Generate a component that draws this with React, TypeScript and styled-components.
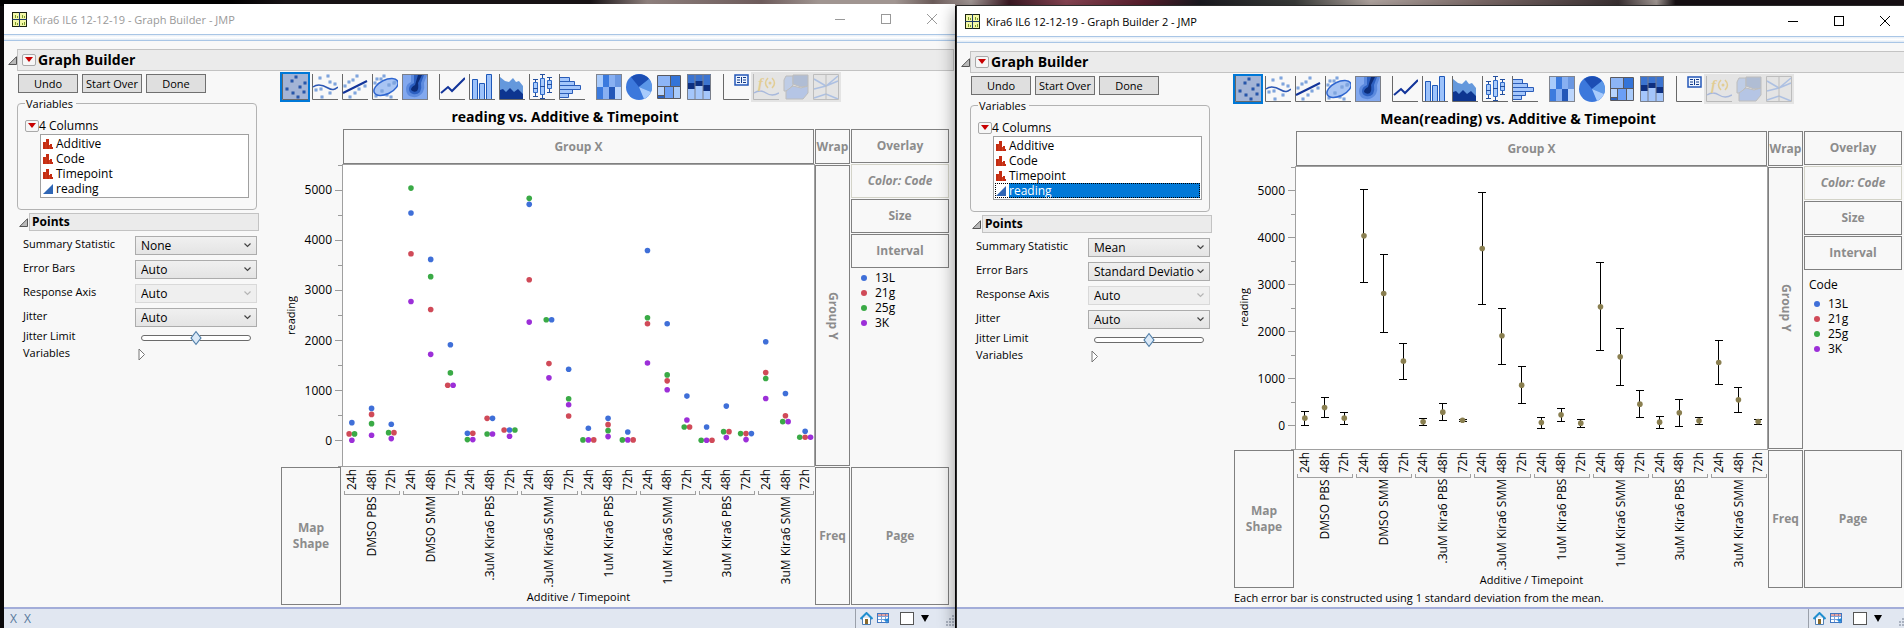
import React from 'react';
import styled, { createGlobalStyle, css } from 'styled-components';

/* ---------- data ---------- */

type CodeName = '13L' | '21g' | '25g' | '3K';

const codeColors: Record<CodeName, string> = {
  '13L': '#3f6fd8',
  '21g': '#d04a58',
  '25g': '#3aaa46',
  '3K': '#9c2fd8',
};

const B: CodeName = '13L';
const R: CodeName = '21g';
const G: CodeName = '25g';
const P: CodeName = '3K';

/* code, reading, jitter step */
type Reading = [CodeName, number, number?];

const readings: Reading[][] = [
  [[B, 364], [R, 140, -1], [G, 140, 1], [P, 13]],
  [[B, 648], [R, 529], [G, 344], [P, 112]],
  [[B, 331], [G, 165, -1], [R, 165, 1], [P, 46]],
  [[G, 5040], [B, 4544], [R, 3730], [P, 2778]],
  [[B, 3618], [G, 3274], [R, 2619], [P, 1726]],
  [[B, 1918], [G, 1356], [R, 1111, -1], [P, 1111, 1]],
  [[B, 152, -1], [R, 152, 1], [G, 26, -1], [P, 26, 1]],
  [[R, 450, -1], [B, 450, 1], [G, 139, -1], [P, 139, 1]],
  [[R, 218, -2], [B, 218], [G, 218, 2], [P, 93]],
  [[G, 4835], [B, 4716], [R, 3214], [P, 2368]],
  [[G, 2414, -1], [B, 2414, 1], [R, 1541], [P, 1257]],
  [[B, 1429], [G, 840], [P, 721], [R, 496]],
  [[B, 251], [G, 20, -2], [P, 20], [R, 20, 2]],
  [[B, 450], [R, 324], [G, 205], [P, 86]],
  [[B, 179], [G, 20, -2], [P, 20], [R, 20, 2]],
  [[B, 3796], [G, 2454], [R, 2335], [P, 1554]],
  [[B, 2335], [G, 1316], [R, 1197], [P, 1019]],
  [[B, 893], [P, 417], [G, 278, -1], [R, 278, 1]],
  [[B, 278], [G, 13, -2], [P, 13], [R, 13, 2]],
  [[B, 694], [G, 185, -1], [R, 185, 1], [P, 66]],
  [[G, 146, -2], [R, 146], [B, 146, 2], [P, 26]],
  [[B, 1978], [R, 1362], [G, 1243], [P, 847]],
  [[B, 946], [R, 503], [G, 384, -1], [P, 384, 1]],
  [[B, 192], [G, 73, -2], [R, 73], [P, 73, 2]],
];

/* mean, mean + sd, mean - sd */
const means: [number, number, number][] = [
  [156, 298, 0], [383, 596, 170], [156, 277, 21],
  [4035, 5021, 3043], [2809, 3638, 1979], [1369, 1745, 979],
  [78, 149, 0], [284, 468, 106], [113, 135, 85],
  [3766, 4957, 2574], [1908, 2489, 1298], [858, 1255, 468],
  [64, 170, -64], [227, 362, 85], [50, 128, -43],
  [2525, 3468, 1596], [1461, 2064, 851], [454, 745, 170],
  [71, 191, -64], [270, 553, -21], [99, 170, 21],
  [1340, 1809, 872], [546, 809, 277], [85, 128, 21],
];

const additives = [
  'DMSO PBS', 'DMSO SMM', '.3uM Kira6 PBS', '.3uM Kira6 SMM',
  '1uM Kira6 PBS', '1uM Kira6 SMM', '3uM Kira6 PBS', '3uM Kira6 SMM',
];
const timepoints = ['24h', '48h', '72h'];

const columns = [
  { name: 'Additive', nominal: true },
  { name: 'Code', nominal: true },
  { name: 'Timepoint', nominal: true },
  { name: 'reading', nominal: false },
];

const yMax = 5500;
const ySpan = 6000;
const yPct = (v: number) => `${((yMax - v) / ySpan) * 100}%`;

/* ---------- styles ---------- */

const Global = createGlobalStyle`
  * { box-sizing: border-box; }
  body {
    margin: 0;
    background: #000;
    color: #000;
    font-family: "Open Sans", "Noto Sans", sans-serif;
    font-size: 12px;
    line-height: 15px;
  }
  button, select, input { font: inherit; color: inherit; }
`;

const Desktop = styled.div`
  display: flex;
  gap: 2px;
  min-height: 100vh;
  padding-left: 4px;
  overflow: hidden;
  background: linear-gradient(
      90deg,
      #000 0 12%, #171215 15% 31%, #8d7f7c 34%, #6d5b5b 40%, #a09591 43% 47%, #6a5a58 49%,
      #a59a98 51%, #3c1a24 53%, #8a4655 56%, #5a1f2e 60%, #1b1a20 63%, #3a3c3a 68%,
      #b5a9a4 72%, #7c6a68 78%, #3c3234 85%, #a49a96 87%, #171014 88% 100%
    )
    top / 100% 6px no-repeat #0a080a;
`;

const WindowFrame = styled.section<{ $front?: boolean }>`
  display: flex;
  flex: 1 1 0;
  flex-direction: column;
  min-width: 0;
  margin-top: ${(p) => (p.$front ? 6 : 4)}px;
  background: #f8f8f8;
  ${(p) =>
    p.$front &&
    css`
      position: relative;
      z-index: 1;
      margin-right: -4px;
      box-shadow: 0 0 0 1px #2b2b2b, -2px 4px 16px rgba(0, 0, 0, 0.4);
    `}
`;

const TitleBar = styled.header<{ $front?: boolean }>`
  display: flex;
  align-items: center;
  gap: 6px;
  height: 30px;
  padding-left: 8px;
  background: #fff;
  color: ${(p) => (p.$front ? '#000' : '#999')};
`;

const WindowTitle = styled.h1`
  flex: 1;
  margin: 0;
  font-size: 11px;
  font-weight: 400;
`;

const WindowButton = styled.button`
  display: grid;
  place-items: center;
  width: 46px;
  height: 28px;
  padding: 0;
  border: 0;
  background: none;
`;

const WindowButtons = styled.div`
  display: flex;
`;

const Rule = styled.div`
  height: 7px;
  border: solid #a9c6e6;
  border-width: 1px 0;
  background: linear-gradient(#e7eef6, #fff, #dfe9f4);
`;

const Content = styled.main`
  display: flex;
  flex: 1;
  flex-direction: column;
  padding: 8px 1px 2px 4px;
`;

const OutlineRow = styled.div`
  display: flex;
  align-items: center;
`;

const OutlineHead = styled.h2`
  display: flex;
  flex: 1;
  align-items: center;
  gap: 2px;
  height: 22px;
  margin: 0;
  padding: 0 0 1px 4px;
  border: 1px solid #c3c3c3;
  background: #ebebeb;
  font-size: 14px;
  font-weight: 700;
`;

const PointsHead = styled(OutlineHead)`
  height: 18px;
  padding-left: 2px;
  font-size: 12px;
`;

const Disclosure = styled.button`
  display: grid;
  place-items: center;
  width: 9px;
  height: 14px;
  padding: 0;
  border: 0;
  background: none;
`;

const MenuButton = styled.button`
  display: grid;
  place-items: center;
  width: 14px;
  height: 12px;
  padding: 0;
  border: 1px solid #a9a9a9;
  border-radius: 2px;
  background: #f6f6f6;
`;

const Workspace = styled.div`
  display: flex;
  flex: 1;
  gap: 22px;
  padding: 1px 5px 0 9px;
`;

const Side = styled.aside`
  display: flex;
  flex: none;
  flex-direction: column;
  width: 242px;
  padding-top: 2px;
`;

const Actions = styled.div`
  display: flex;
  gap: 4px;
  padding-left: 1px;
`;

const ActionButton = styled.button`
  width: 60px;
  height: 19px;
  padding: 0;
  border: 1px solid #707070;
  background: #dfdfdf;
  font-size: 11px;
  line-height: 15px;
  white-space: nowrap;
`;

const Fieldset = styled.fieldset`
  width: 240px;
  height: 114px;
  margin: 3px 0 3px;
  padding: 6px 7px 0;
  border: 1px solid #b3b3b3;
  border-radius: 4px;
`;

const Legend = styled.legend`
  padding: 0 3px 0 1px;
  font-size: 11px;
`;

const ColumnsHead = styled.div`
  display: flex;
  align-items: center;
  height: 17px;
`;

const ColumnList = styled.ul`
  height: 64px;
  margin: 0 0 0 15px;
  padding: 1px 1px;
  border: 1px solid #a0a0a0;
  background: #fff;
  list-style: none;
`;

const ColumnItem = styled.li<{ $selected?: boolean }>`
  display: flex;
  align-items: center;
  height: 15px;
  padding-left: 1px;
  gap: 3px;
  outline: ${(p) => (p.$selected ? '1px dotted #000' : 'none')};
  outline-offset: -1px;
  span {
    flex: 1;
    color: ${(p) => (p.$selected ? '#fff' : '#000')};
    background: ${(p) => (p.$selected ? '#0078d7' : 'none')};
  }
`;

const PointsRow = styled(OutlineRow)`
  padding-left: 2px;
  gap: 1px;
  margin-bottom: 5px;
`;

const Field = styled.div<{ $h: number; $tight?: boolean }>`
  display: grid;
  grid-template-columns: 112px 122px;
  align-items: start;
  height: ${(p) => p.$h}px;
  padding-left: 6px;
  font-size: 11px;
  line-height: ${(p) => (p.$tight ? 11 : 15)}px;
`;

const SelectBox = styled.div`
  position: relative;
  svg {
    position: absolute;
    top: 7px;
    right: 6px;
    pointer-events: none;
  }
`;

const Select = styled.select`
  display: block;
  width: 100%;
  height: 19px;
  padding: 0 13px 0 5px;
  border: 1px solid #acacac;
  border-radius: 0;
  background: linear-gradient(#f0f0f0, #e4e4e4);
  appearance: none;
  font-size: 12px;
  line-height: 17px;
  white-space: nowrap;
  overflow: hidden;
  text-overflow: clip;
  &:disabled {
    border-color: #d9d9d9;
    background: #efefef;
    color: #000;
    opacity: 1;
  }
`;

const Slider = styled.input`
  width: 110px;
  height: 15px;
  margin: 0 0 0 6px;
  background: none;
  appearance: none;
  &::-webkit-slider-runnable-track {
    height: 6px;
    border: 1px solid #6b6b6b;
    border-radius: 3px;
    background: #fff;
  }
  &::-webkit-slider-thumb {
    width: 8px;
    height: 8px;
    margin-top: -2px;
    border: 1px solid #5480a8;
    background: #dbe9f7;
    appearance: none;
    transform: scaleY(1.3) rotate(45deg);
  }
`;

const VariablesToggle = styled(Disclosure)`
  margin-left: 2px;
`;

const GraphPane = styled.div`
  display: flex;
  flex: 1;
  flex-direction: column;
  min-width: 0;
`;

const Toolbar = styled.div`
  display: flex;
  gap: 7px;
  margin-left: -1px;
`;

const ToolGroup = styled.div`
  display: flex;
`;

const Tool = styled.button<{ $selected?: boolean }>`
  width: 30px;
  height: 30px;
  padding: ${(p) => (p.$selected ? 0 : 2)}px;
  border: ${(p) => (p.$selected ? '2px solid #0078d7' : '0')};
  background: ${(p) => (p.$selected ? '#a3b4d6' : 'none')};
  svg { display: block; }
  &:disabled {
    background: #e4e4e4;
    svg { opacity: 0.35; }
  }
`;

const GraphTitle = styled.h3`
  height: 27px;
  margin: 0 100px 0 0;
  font-size: 14px;
  font-weight: 700;
  line-height: 29px;
  text-align: center;
`;

const GraphGrid = styled.div`
  display: grid;
  flex: 1;
  grid-template-columns: 60px minmax(0, 1fr) 35px 98px;
  grid-template-rows: 35px minmax(180px, 1fr) 138px;
  column-gap: 1px;
`;

const Zone = styled.div<{ $indent?: boolean; $inset?: boolean }>`
  display: grid;
  place-items: center;
  margin: ${(p) => (p.$inset ? '1px 0' : '0')};
  margin-left: ${(p) => (p.$indent ? 1 : 0)}px;
  border: 1px solid #808080;
  color: #8c8c8c;
  font-size: 12px;
  font-weight: 700;
  line-height: 16px;
  text-align: center;
`;

const SideZone = styled(Zone)<{ $assigned?: boolean }>`
  height: 34px;
  margin-bottom: 1px;
  ${(p) =>
    p.$assigned &&
    css`
      border-color: #d3d3c8;
      font-style: italic;
    `}
`;

const Turned = styled.span`
  writing-mode: vertical-rl;
`;

const ZoneColumn = styled.div`
  grid-row: 1 / 3;
  grid-column: 4;
`;

const LegendTitle = styled.div`
  padding: 6px 0 3px 5px;
`;

const LegendList = styled.ul`
  margin: 0;
  padding: 1px 0 0;
  list-style: none;
`;

const LegendItem = styled.li`
  display: flex;
  align-items: center;
  gap: 8px;
  height: 15px;
  padding-left: 10px;
`;

const Dot = styled.i`
  width: 6px;
  height: 6px;
  border-radius: 3px;
  background: ${(p) => p.color};
`;

const YAxis = styled.div`
  display: flex;
  justify-content: space-between;
  align-items: stretch;
  padding: 1px 0 1px 2px;
`;

const YTitle = styled.div`
  align-self: center;
  writing-mode: vertical-rl;
  transform: rotate(180deg);
  font-size: 11px;
`;

const AxisScale = styled.svg`
  flex: none;
  width: 42px;
  height: 100%;
  overflow: visible;
  text { font-size: 12px; text-anchor: end; }
  line { stroke: #9b9b9b; shape-rendering: crispEdges; }
`;

const PlotBox = styled.div`
  position: relative;
  margin-right: -1px;
  border: 1px solid #a0a0a0;
  background: #fff;
`;

/* spans the frame's borders so the categories line up with the axis below */
const PlotSvg = styled.svg`
  position: absolute;
  top: 0;
  left: -1px;
  width: calc(100% + 2px);
  height: 100%;
`;

const XAxis = styled.div`
  display: flex;
  flex-direction: column;
  justify-content: space-between;
  margin-right: -1px;
  padding-bottom: 1px;
`;

const XGroups = styled.div`
  display: flex;
`;

const XGroup = styled.div`
  display: flex;
  flex: 1;
  flex-direction: column;
  align-items: center;
`;

const TimeRow = styled.div`
  display: flex;
  align-self: stretch;
  height: 24px;
  padding-top: 2px;
`;

const Upright = styled.span`
  flex: 1;
  display: flex;
  align-items: center;
  justify-content: flex-end;
  writing-mode: vertical-rl;
  transform: rotate(180deg);
  line-height: 15px;
  white-space: nowrap;
`;

const Bracket = styled.div`
  align-self: stretch;
  height: 4px;
  margin: 0 1px 1px 2px;
  border: 1px solid #a0a0a0;
  border-top: 0;
`;

const XTitle = styled.div`
  font-size: 11px;
  text-align: center;
`;

const Footnote = styled.p`
  height: 17px;
  margin: 0;
  font-size: 11px;
  line-height: 20px;
`;

const StatusBar = styled.footer`
  display: flex;
  align-items: center;
  height: 21px;
  border-top: 2px solid #a3add9;
  background: #e1e7f1;
  color: #56779b;
`;

const StatusText = styled.div`
  display: flex;
  flex: 1;
  gap: 7px;
  padding-left: 6px;
`;

const StatusTools = styled.div`
  display: flex;
  align-items: center;
  align-self: stretch;
  gap: 4px;
  padding-left: 4px;
  border-left: 1px solid #9aa0aa;
  color: #000;
`;

const StatusCheck = styled.input`
  width: 14px;
  height: 13px;
  margin: 0 3px 0 6px;
  border: 1px solid #555;
  background: #fff;
  appearance: none;
`;

/* ---------- small drawings ---------- */

const AppIcon = () => (
  <svg width="15" height="15" viewBox="0 0 15 15" aria-hidden="true">
    <rect x=".5" y=".5" width="14" height="14" fill="#f3f8a8" stroke="#1c2410" />
    <path d="M7.5 0V15M0 7.5H15" stroke="#1d3a66" />
    <path d="M3.5 3V6M5.5 4V6M10.5 3V6M12.5 4V6M3.5 10V13M5.5 11V13M10.5 11V13M12.5 10V13" stroke="#7a9a2a" />
  </svg>
);

const RedArrow = () => (
  <svg width="8" height="5" viewBox="0 0 8 5" aria-hidden="true">
    <path d="M0 0H8L4 5Z" fill="#c80000" />
  </svg>
);

const OpenTriangle = () => (
  <svg width="9" height="9" viewBox="0 0 9 9" aria-hidden="true">
    <path d="M.7 8.5H8.5V.7Z" fill="#b9b9b9" stroke="#555" />
  </svg>
);

const ClosedTriangle = () => (
  <svg width="8" height="13" viewBox="0 0 8 13" aria-hidden="true">
    <path d="M1 1L6.500 6.500L1 12Z" fill="#fff" stroke="#777" />
  </svg>
);

const NominalIcon = () => (
  <svg width="10" height="10" viewBox="0 0 10 10" aria-hidden="true">
    <path d="M0 3H3V0H6V6H7V5H9V8H10V10H0Z" fill="#c42c12" />
    <path d="M3 3V10M6.500 6V10" stroke="#d9502e" strokeWidth=".6" />
  </svg>
);

const ContinuousIcon = () => (
  <svg width="10" height="10" viewBox="0 0 10 10" aria-hidden="true">
    <path d="M0 10L10 0V10Z" fill="#2f66b5" />
  </svg>
);

const Chevron = ({ dim }: { dim?: boolean }) => (
  <svg width="7" height="5" viewBox="0 0 7 5" aria-hidden="true">
    <path d="M.5 .5L3.500 3.500L6.500 .5" fill="none" stroke={dim ? '#b5b5b5' : '#444'} strokeWidth="1.200" />
  </svg>
);

const Axes = () => <path d="M.5 0V25.500H26" fill="none" stroke="#686868" />;

const Dots = ({ at, dark }: { at: number[][]; dark?: boolean }) => (
  <>
    {at.map(([x, y]) => (
      <rect
        key={`${x}-${y}`}
        x={x - 1}
        y={y - 1}
        width="2"
        height="2"
        fill={dark ? '#2f6ad0' : '#a9c8f6'}
        stroke={dark ? '#2450a0' : '#7199d6'}
      />
    ))}
  </>
);

const toolDrawings: Record<string, React.ReactNode> = {
  Points: (
    <>
      <Axes />
      <Dots dark at={[[14, 3], [10, 7], [23, 9], [18, 13], [5, 15], [22, 18], [11, 19], [16, 23]]} />
    </>
  ),
  Smoother: (
    <>
      <Axes />
      <Dots at={[[8, 4], [16, 2], [18, 8], [23, 10], [4, 16], [9, 15], [18, 19], [10, 23]]} />
      <path d="M1 13C6 9 11 11 16 14S23 15 26 13" fill="none" stroke="#2b56b4" strokeWidth="1.500" />
    </>
  ),
  'Line of Fit': (
    <>
      <Axes />
      <Dots at={[[15, 2], [11, 6], [7, 8], [3, 12], [23, 12], [17, 15], [13, 19], [8, 23]]} />
      <path d="M1 19L25 7" stroke="#12349a" strokeWidth="2" />
    </>
  ),
  Ellipse: (
    <>
      <Axes />
      <Dots at={[[12, 2], [5, 5], [9, 5], [3, 9], [4, 22], [15, 21], [19, 23], [23, 8]]} />
      <ellipse cx="14" cy="13" rx="13" ry="7" transform="rotate(-26 14 13)" fill="#8fb4f2" fillOpacity=".75" stroke="#2f66d0" strokeWidth="1.500" />
      <Dots at={[[17, 11], [10, 17], [22, 9]]} />
    </>
  ),
  Contour: (
    <>
      <rect x="0" y="0" width="26" height="26" fill="#82a8ee" />
      <path d="M9 1H25L22 9Q23 14 21 18Q17 24 11 23Q4 22 4 15Q4 10 9 8Z" fill="#5c8ade" />
      <path d="M12 1H22L19 9Q20 14 18 18Q15 21 11 20Q7 19 7 15Q7 11 12 9Z" fill="#2c5fc0" />
      <path d="M16 1H20L16 9Q17 14 15 17Q12 19 9 16Q9 13 13 11Z" fill="#0c2c78" />
      <rect x=".5" y=".5" width="25" height="25" fill="none" stroke="#7b7f88" />
    </>
  ),
  Line: (
    <>
      <Axes />
      <path d="M2 19L9 13L13 17L26 4" fill="none" stroke="#12349a" strokeWidth="2" />
    </>
  ),
  Bar: (
    <>
      <Axes />
      <path d="M3.500 25V5.500H8.500V25M10.500 25V9.500H15.500V25M17.500 25V.5H22.500V25" fill="#9cc2fb" stroke="#1f58b8" />
    </>
  ),
  Area: (
    <>
      <path d="M1 3L6 7L10 8L14 4L17 8L20 7L24 12V25H1Z" fill="#6498dc" />
      <path d="M1 16L4 15L7 18L11 14L15 18L19 15L24 20V25H1Z" fill="#0d3590" />
      <Axes />
    </>
  ),
  'Box Plot': (
    <>
      <Axes />
      <path d="M4 5.500H9M4 22.500H9M6.500 5V22M11 .5H16M11 24.500H16M13.500 0V24M18 3.500H23M18 18.500H23M20.500 3V18" fill="none" stroke="#234f9e" />
      <path d="M4.500 8.500H8.500V18.500H4.500ZM11.500 4.500H15.500V20.500H11.500ZM18.500 6.500H22.500V14.500H18.500Z" fill="#a9cbfb" stroke="#2f6ac8" />
      <path d="M4 14.500H9M11 12.500H16M18 10.500H23" stroke="#234f9e" />
    </>
  ),
  Histogram: (
    <>
      <path
        d="M1 3.500H10.500V7.500H1M1 7.500H15.500V11.500H1M1 11.500H21.500V15.500H1M1 15.500H13.500V19.500H1M1 19.500H9.500V23.500H1"
        fill="#a4c6fb"
        stroke="#2a5cb8"
      />
      <Axes />
    </>
  ),
  Heatmap: (
    <>
      <path d="M0 0H7V13H0Z" fill="#a9cbfb" />
      <path d="M7 0H13V13H7Z" fill="#3b7ade" />
      <path d="M13 0H19V13H13Z" fill="#88b0f2" />
      <path d="M19 0H26V13H19Z" fill="#6a97e2" />
      <path d="M0 13H7V26H0Z" fill="#3b7ade" />
      <path d="M7 13H13V26H7Z" fill="#88b0f2" />
      <path d="M13 13H19V26H13Z" fill="#2357b8" />
      <path d="M19 13H26V26H19Z" fill="#bcd6fd" />
      <rect x=".5" y=".5" width="25" height="25" fill="none" stroke="#808590" />
    </>
  ),
  Pie: (
    <>
      <circle cx="13" cy="13" r="13" fill="#3c78dc" />
      <path d="M13 13L5 3A13 13 0 0 1 23 5Z" fill="#1c4eb4" />
      <path d="M13 13L23 5A13 13 0 0 1 25 18Z" fill="#5b97e8" />
      <path d="M13 13L25 18A13 13 0 0 1 18 25Z" fill="#a8cbfc" />
    </>
  ),
  Treemap: (
    <>
      <rect x="2" y="2" width="13" height="11" fill="#8db5f6" />
      <rect x="15" y="2" width="9" height="11" fill="#3474d8" />
      <rect x="2" y="13" width="6" height="8" fill="#b7d3fd" />
      <rect x="2" y="21" width="6" height="4" fill="#2c62c0" />
      <rect x="8" y="13" width="9" height="12" fill="#6b9ff6" />
      <rect x="17" y="13" width="7" height="12" fill="#a9cbfb" />
      <path d="M1.500 1.500H24.500V24.500H1.500ZM1 12.500H25M14.500 1V12M8.500 12V25M17.500 12V25M1 21.500H8" fill="none" stroke="#5a5a60" />
    </>
  ),
  Mosaic: (
    <>
      <path d="M1 0H25V26H1Z" fill="#a4c6fb" />
      <path d="M1 0H9V9H1ZM9 0H17V7H9ZM17 0H25V11H17Z" fill="#3c74d0" />
      <path d="M1 9H9V15H1ZM9 7H17V12H9ZM17 11H25V17H17Z" fill="#0d2f80" />
      <path d="M1.500 .5H24.500V25.500H1.500ZM9 0V26M17 0V26" fill="none" stroke="#7a7f8a" />
    </>
  ),
  'Caption Box': (
    <>
      <Axes />
      <rect x="12" y="1" width="13" height="10" fill="#eef5ff" stroke="#2457b8" strokeWidth="1.500" />
      <path d="M14 3.500H17M20 3.500H23M14 6H17M20 6H23M14 8.500H17M20 8.500H23M18.500 3V9" stroke="#123a8a" />
    </>
  ),
  Formula: (
    <>
      <Axes />
      <path d="M1 19Q7 15 13 19T26 19" fill="none" stroke="#3a6ad0" strokeWidth="1.500" />
      <text x="5" y="14" fontFamily="Liberation Serif, serif" fontSize="15" fontStyle="italic" fontWeight="700" fill="#e0a400">
        f
      </text>
      <path d="M15 4Q10 9 15 14M19 4Q24 9 19 14" fill="none" stroke="#e0a400" strokeWidth="1.500" />
      <circle cx="17" cy="9" r="1.500" fill="#e0a400" />
    </>
  ),
  'Map Shapes': (
    <>
      <path d="M1 6L3 2H10V11L4 17H1Z" fill="#7da4ea" stroke="#777" />
      <path d="M10 1H25V12L18 13L10 10Z" fill="#5277b8" stroke="#777" />
      <path d="M10 12L18 14L25 12V19L20 25H3V17Z" fill="#5f8ee8" stroke="#777" />
    </>
  ),
  Parallel: (
    <>
      <path d="M1 5L13 12L25 2M1 15L13 12L25 7M1 24L13 20L25 25" fill="none" stroke="#4a80e0" strokeWidth="1.500" />
      <path d="M.5 .5H25.500V25.500H.5ZM13 0V26" fill="none" stroke="#777" />
    </>
  ),
};

const toolGroups = [
  ['Points', 'Smoother', 'Line of Fit', 'Ellipse', 'Contour'],
  ['Line', 'Bar', 'Area', 'Box Plot', 'Histogram'],
  ['Heatmap', 'Pie', 'Treemap', 'Mosaic'],
  ['Caption Box', 'Formula', 'Map Shapes', 'Parallel'],
];
const disabledTools = ['Formula', 'Map Shapes', 'Parallel'];

/* ---------- parts ---------- */

const WindowControls = () => (
  <WindowButtons>
    <WindowButton aria-label="Minimize">
      <svg width="10" height="10"><path d="M0 5.500H10" stroke="currentColor" /></svg>
    </WindowButton>
    <WindowButton aria-label="Maximize">
      <svg width="10" height="10"><rect x=".5" y=".5" width="9" height="9" fill="none" stroke="currentColor" /></svg>
    </WindowButton>
    <WindowButton aria-label="Close">
      <svg width="10" height="10"><path d="M0 0L10 10M10 0L0 10" stroke="currentColor" /></svg>
    </WindowButton>
  </WindowButtons>
);

interface PickProps {
  id: string;
  label: string;
  value: string;
  disabled?: boolean;
  height?: number;
}

const Pick = ({ id, label, value, disabled, height = 24 }: PickProps) => (
  <Field $h={height}>
    <label htmlFor={id}>{label}</label>
    <SelectBox>
      <Select id={id} defaultValue={value} disabled={disabled}>
        <option>{value}</option>
      </Select>
      <Chevron dim={disabled} />
    </SelectBox>
  </Field>
);

const YScale = () => (
  <AxisScale aria-hidden="true">
    {Array.from({ length: 13 }, (_, i) => 5500 - i * 500).map((v) => {
      const major = v % 1000 === 0;
      return (
        <React.Fragment key={v}>
          <line x1={major ? 36 : 39} x2="43" y1={yPct(v)} y2={yPct(v)} />
          {major && (
            <text x="33" y={yPct(v)} dy="4">
              {v}
            </text>
          )}
        </React.Fragment>
      );
    })}
  </AxisScale>
);

const categoryX = (i: number) => `${((i + 0.5) / 24) * 100}%`;

const PointsPlot = () => (
  <PlotSvg role="img" aria-label="Individual readings by additive and timepoint">
    {readings.map((points, i) => (
      <svg key={i} x={categoryX(i)} overflow="visible">
        {points.map(([code, value, step = 0]) => (
          <circle key={code} cx={step * 2.7} cy={yPct(value)} r="2.800" fill={codeColors[code]} />
        ))}
      </svg>
    ))}
  </PlotSvg>
);

const MeansPlot = () => (
  <PlotSvg role="img" aria-label="Mean reading with standard deviation by additive and timepoint">
    {means.map(([mean, high, low], i) => (
      <svg key={i} x={categoryX(i)} overflow="visible">
        <g stroke="#000" shapeRendering="crispEdges">
          <line x1="0" x2="0" y1={yPct(high)} y2={yPct(low)} />
          <line x1="-4" x2="4" y1={yPct(high)} y2={yPct(high)} />
          <line x1="-4" x2="4" y1={yPct(low)} y2={yPct(low)} />
        </g>
        <circle cx="0" cy={yPct(mean)} r="2.800" fill="#8a7f50" />
      </svg>
    ))}
  </PlotSvg>
);

interface BuilderProps {
  id: string;
  title: string;
  graphTitle: string;
  statistic: string;
  errorBars: string;
  selectedColumn?: string;
  legendTitle?: string;
  status?: string[];
  footnote?: string;
  front?: boolean;
  plot: React.ReactNode;
}

const GraphBuilder = (p: BuilderProps) => (
  <WindowFrame $front={p.front}>
    <TitleBar $front={p.front}>
      <AppIcon />
      <WindowTitle>{p.title}</WindowTitle>
      <WindowControls />
    </TitleBar>
    <Rule />
    <Content>
      <OutlineRow>
        <Disclosure aria-label="Collapse Graph Builder"><OpenTriangle /></Disclosure>
        <OutlineHead>
          <MenuButton aria-label="Graph Builder menu"><RedArrow /></MenuButton>
          Graph Builder
        </OutlineHead>
      </OutlineRow>
      <Workspace>
        <Side>
          <Actions>
            <ActionButton>Undo</ActionButton>
            <ActionButton>Start Over</ActionButton>
            <ActionButton>Done</ActionButton>
          </Actions>
          <Fieldset>
            <Legend>Variables</Legend>
            <ColumnsHead>
              <MenuButton aria-label="Columns menu"><RedArrow /></MenuButton>
              4 Columns
            </ColumnsHead>
            <ColumnList role="listbox" aria-label="Columns">
              {columns.map((c) => (
                <ColumnItem
                  key={c.name}
                  role="option"
                  aria-selected={c.name === p.selectedColumn}
                  $selected={c.name === p.selectedColumn}
                >
                  {c.nominal ? <NominalIcon /> : <ContinuousIcon />}
                  <span>{c.name}</span>
                </ColumnItem>
              ))}
            </ColumnList>
          </Fieldset>
          <PointsRow>
            <Disclosure aria-label="Collapse Points"><OpenTriangle /></Disclosure>
            <PointsHead>Points</PointsHead>
          </PointsRow>
          <Pick id={`${p.id}-stat`} label="Summary Statistic" value={p.statistic} />
          <Pick id={`${p.id}-err`} label="Error Bars" value={p.errorBars} />
          <Pick id={`${p.id}-axis`} label="Response Axis" value="Auto" disabled />
          <Pick id={`${p.id}-jit`} label="Jitter" value="Auto" height={22} />
          <Field $h={17} $tight>
            <label htmlFor={`${p.id}-limit`}>Jitter Limit</label>
            <Slider id={`${p.id}-limit`} type="range" defaultValue={50} />
          </Field>
          <Field $h={17} $tight>
            <span>Variables</span>
            <VariablesToggle aria-label="Expand variables"><ClosedTriangle /></VariablesToggle>
          </Field>
        </Side>
        <GraphPane>
          <Toolbar role="toolbar" aria-label="Graph elements">
            {toolGroups.map((group) => (
              <ToolGroup key={group[0]}>
                {group.map((name) => (
                  <Tool key={name} aria-label={name} $selected={name === 'Points'} disabled={disabledTools.includes(name)}>
                    <svg width="26" height="26" viewBox="0 0 26 26" aria-hidden="true">
                      {toolDrawings[name]}
                    </svg>
                  </Tool>
                ))}
              </ToolGroup>
            ))}
          </Toolbar>
          <GraphTitle>{p.graphTitle}</GraphTitle>
          <GraphGrid>
            <span />
            <Zone $indent>Group X</Zone>
            <Zone>Wrap</Zone>
            <ZoneColumn>
              <SideZone>Overlay</SideZone>
              <SideZone $assigned>Color: Code</SideZone>
              <SideZone>Size</SideZone>
              <SideZone>Interval</SideZone>
              {p.legendTitle && <LegendTitle>{p.legendTitle}</LegendTitle>}
              <LegendList>
                {(Object.keys(codeColors) as CodeName[]).map((code) => (
                  <LegendItem key={code}>
                    <Dot color={codeColors[code]} />
                    {code}
                  </LegendItem>
                ))}
              </LegendList>
            </ZoneColumn>
            <YAxis>
              <YTitle>reading</YTitle>
              <YScale />
            </YAxis>
            <PlotBox>{p.plot}</PlotBox>
            <Zone $inset><Turned>Group Y</Turned></Zone>
            <Zone>Map<br />Shape</Zone>
            <XAxis>
              <XGroups>
                {additives.map((additive) => (
                  <XGroup key={additive}>
                    <TimeRow>
                      {timepoints.map((t) => (
                        <Upright key={t}>{t}</Upright>
                      ))}
                    </TimeRow>
                    <Bracket />
                    <Upright>{additive}</Upright>
                  </XGroup>
                ))}
              </XGroups>
              <XTitle>Additive / Timepoint</XTitle>
            </XAxis>
            <Zone>Freq</Zone>
            <Zone>Page</Zone>
          </GraphGrid>
          {p.footnote && <Footnote>{p.footnote}</Footnote>}
        </GraphPane>
      </Workspace>
    </Content>
    <StatusBar>
      <StatusText>
        {p.status?.map((mark, i) => <span key={i}>{mark}</span>)}
      </StatusText>
      <StatusTools>
        <svg width="13" height="13" viewBox="0 0 13 13" aria-hidden="true">
          <path d="M2.500 6V12.500H10.500V6" fill="#fff" stroke="#4f7fb4" />
          <path d="M.5 7L6.500 1L12.500 7" fill="none" stroke="#1f8fd0" strokeWidth="2" />
          <rect x="5" y="7" width="3" height="5" fill="#8a6a2a" />
        </svg>
        <svg width="13" height="13" viewBox="0 0 13 13" aria-hidden="true">
          <rect x=".5" y="1.500" width="11" height="9" fill="#fff" stroke="#3f76c0" />
          <path d="M1 4.500H11M1 7.500H11M4.500 2V10M8.500 2V10" stroke="#7ba3dc" />
          <path d="M1 3H11" stroke="#c04a4a" />
          <path d="M6 8L12 6L10 12L9 9Z" fill="#1f86d8" />
        </svg>
        <StatusCheck type="checkbox" aria-label="Mark window" />
        <svg width="8" height="7" viewBox="0 0 8 7" aria-hidden="true"><path d="M0 0H8L4 7Z" fill="#000" /></svg>
        <svg width="22" height="17" viewBox="0 0 22 17" aria-hidden="true">
          <path d="M19 6H21M16 9H18M19 9H21M13 12H15M16 12H18M19 12H21M13 15H15M16 15H18M19 15H21" stroke="#aab2c0" strokeWidth="2" />
        </svg>
      </StatusTools>
    </StatusBar>
  </WindowFrame>
);

export default function App() {
  return (
    <>
      <Global />
      <Desktop>
        <GraphBuilder
          id="g1"
          title="Kira6 IL6 12-12-19 - Graph Builder - JMP"
          graphTitle="reading vs. Additive & Timepoint"
          statistic="None"
          errorBars="Auto"
          status={['X', 'X']}
          plot={<PointsPlot />}
        />
        <GraphBuilder
          id="g2"
          front
          title="Kira6 IL6 12-12-19 - Graph Builder 2 - JMP"
          graphTitle="Mean(reading) vs. Additive & Timepoint"
          statistic="Mean"
          errorBars="Standard Deviatio"
          selectedColumn="reading"
          legendTitle="Code"
          footnote="Each error bar is constructed using 1 standard deviation from the mean."
          plot={<MeansPlot />}
        />
      </Desktop>
    </>
  );
}
